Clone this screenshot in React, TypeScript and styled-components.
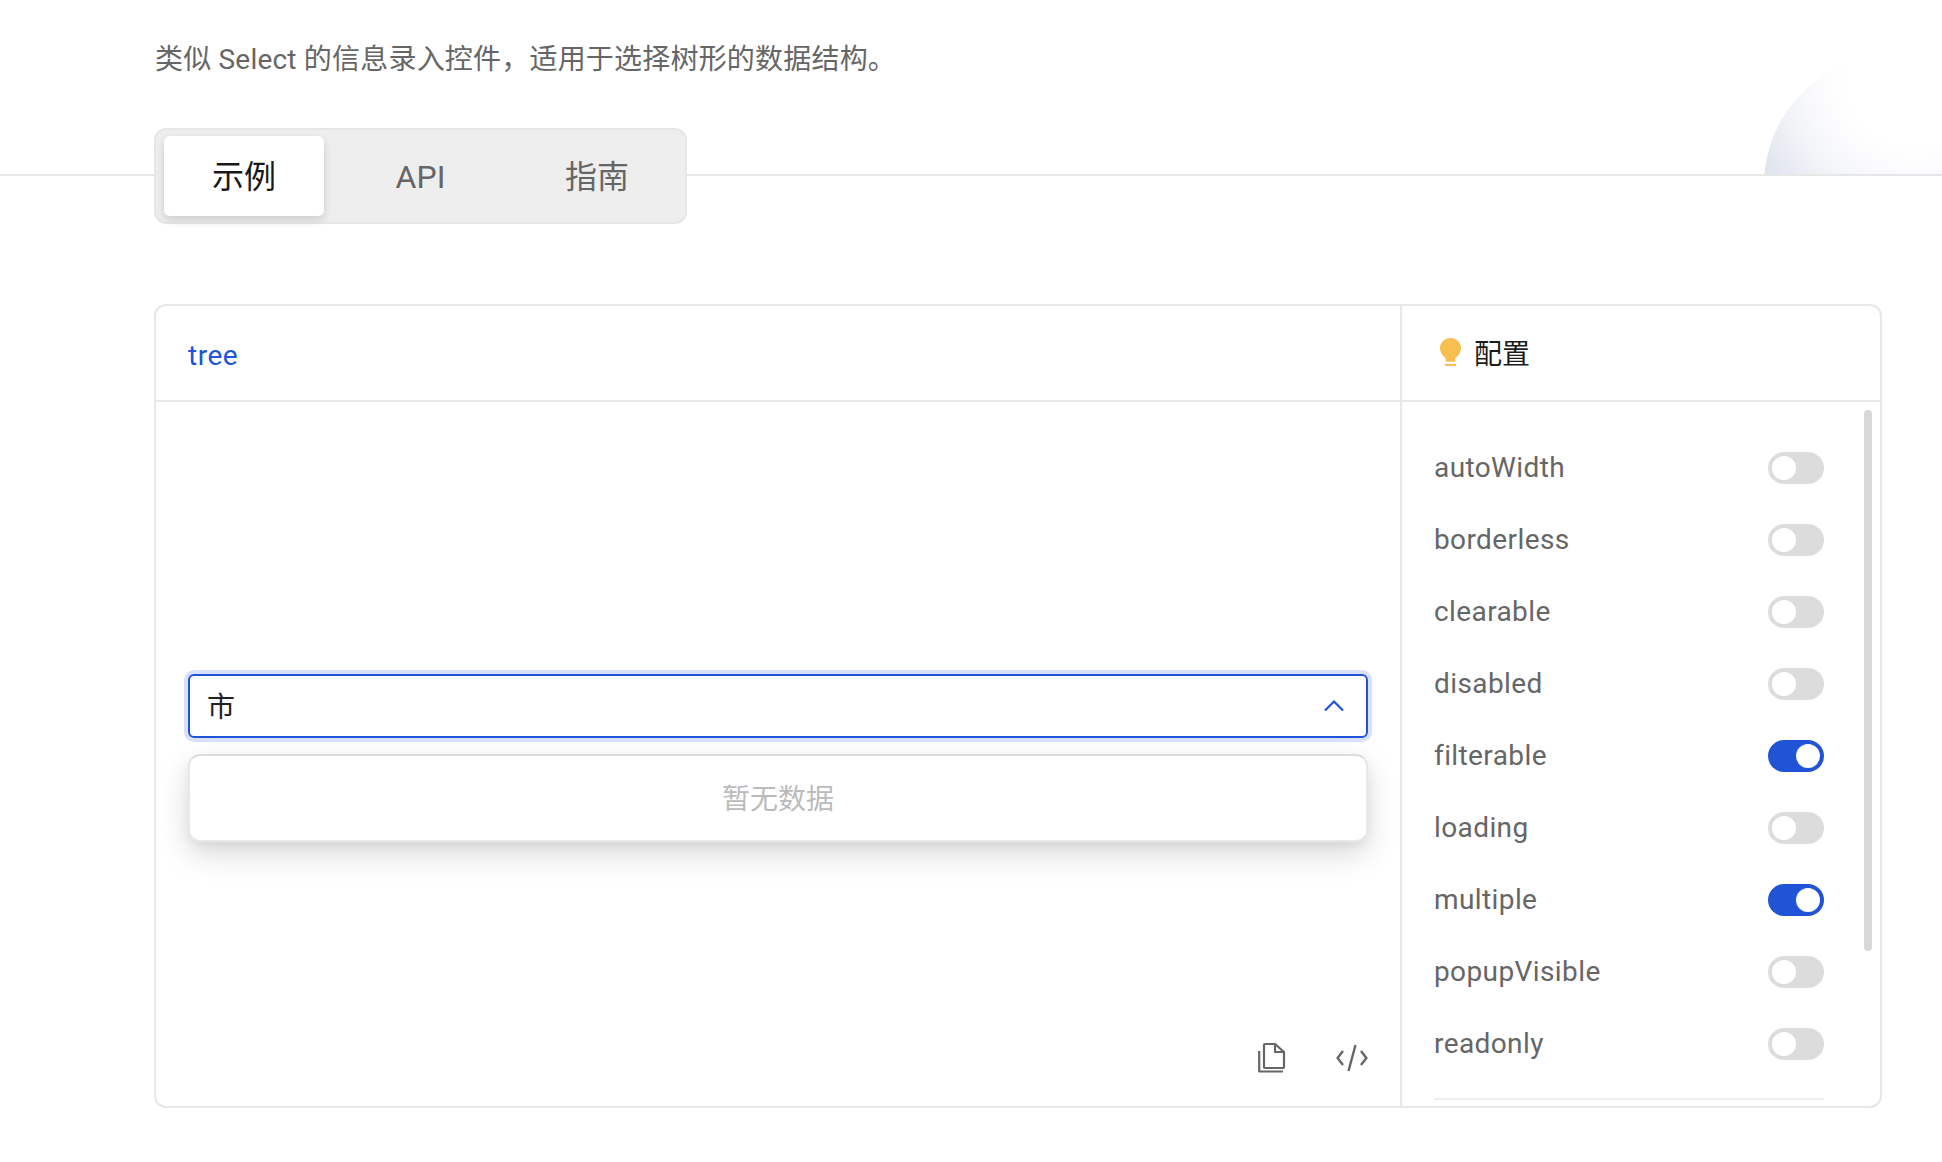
import React from 'react'
import styled, { createGlobalStyle } from 'styled-components'

const GlobalStyle = createGlobalStyle`
  html, body {
    margin: 0;
    height: 100%;
    background: #fff;
    overflow: hidden;
  }
  body {
    font-family: Roboto, "Noto Sans CJK SC", sans-serif;
    color: #666;
  }
`

const Page = styled.div`
  width: 1942px;
  height: 1162px;
`

const Header = styled.header`
  position: relative;
  box-sizing: border-box;
  height: 176px;
  padding: 40px 0 0 154px;
  border-bottom: 2px solid #e7e7e7;
`

const BlobClip = styled.div`
  position: absolute;
  inset: 0;
  overflow: hidden;
`

const Blob = styled.div`
  position: absolute;
  left: 1764px;
  top: 55px;
  width: 260px;
  height: 260px;
  border-radius: 50%;
  background: radial-gradient(
    circle at 151px 20px,
    #fff 0,
    #fff 70px,
    #fcfcfe 92px,
    #f7f8fb 112px,
    #f1f3f7 132px,
    #e1e5ef 172px,
    #dce0eb 200px
  );
`

const Description = styled.p`
  margin: 0 0 48px 1px;
  font-size: 28px;
  line-height: 40px;
  letter-spacing: 0.2px;
  color: #666;
`

const Tabs = styled.nav`
  position: relative;
  display: flex;
  box-sizing: border-box;
  width: 533px;
  height: 96px;
  padding: 6px 8px;
  border: 2px solid #e7e7e7;
  border-radius: 12px;
  background: #eee;
`

const Tab = styled.div<{ $active?: boolean; $wide?: boolean }>`
  display: flex;
  align-items: center;
  justify-content: center;
  box-sizing: border-box;
  width: 160px;
  padding-top: 2px;
  ${p => p.$wide && 'flex: 1;'}
  font-size: 32px;
  line-height: 44px;
  border-radius: 6px;
  color: ${p => (p.$active ? '#181818' : '#666')};
  background: ${p => (p.$active ? '#fff' : 'transparent')};
  box-shadow: ${p => (p.$active ? '0 4px 10px rgba(0, 0, 0, 0.14)' : 'none')};
`

const Card = styled.section`
  display: flex;
  box-sizing: border-box;
  width: 1728px;
  height: 804px;
  margin: 128px 0 0 154px;
  border: 2px solid #e7e7e7;
  border-radius: 12px;
  overflow: hidden;
`

const Demo = styled.div`
  display: flex;
  flex-direction: column;
  width: 1244px;
  border-right: 2px solid #e7e7e7;
`

const DemoTitle = styled.div`
  display: flex;
  align-items: center;
  box-sizing: border-box;
  height: 96px;
  padding: 4px 32px 0;
  border-bottom: 2px solid #e7e7e7;
  font-size: 28px;
  letter-spacing: 0.5px;
  color: #2053d6;
`

const Stage = styled.div`
  position: relative;
  flex: 1;
  padding: 272px 32px 0;
`

const SelectBox = styled.div`
  display: flex;
  align-items: center;
  justify-content: space-between;
  box-sizing: border-box;
  height: 64px;
  padding: 0 22px 0 17px;
  border: 2px solid #2053d6;
  border-radius: 6px;
  box-shadow: 0 0 0 4px #d8e0fa;
  font-size: 28px;
  color: #222;

  span {
    margin-top: -2px;
  }
`

const Popup = styled.div`
  position: absolute;
  top: 352px;
  left: 32px;
  right: 32px;
  display: flex;
  align-items: center;
  justify-content: center;
  box-sizing: border-box;
  height: 88px;
  padding-bottom: 2px;
  border: 2px solid #e8e8e8;
  border-top-color: #dcdcdc;
  border-radius: 12px;
  background: #fff;
  box-shadow: 0 12px 30px rgba(0, 0, 0, 0.15), 0 4px 10px rgba(0, 0, 0, 0.05);
  font-size: 28px;
  color: #bbb;
`

const Actions = styled.div`
  position: absolute;
  right: 32px;
  bottom: 33px;
  display: flex;
  align-items: center;
  gap: 50px;
  color: #666;
`

const Config = styled.aside`
  position: relative;
  flex: 1;
  display: flex;
  flex-direction: column;
  overflow: hidden;
`

const ConfigTitle = styled.div`
  display: flex;
  align-items: center;
  gap: 13px;
  box-sizing: border-box;
  height: 96px;
  padding: 0 0 2px 38px;
  border-bottom: 2px solid #e7e7e7;
  font-size: 28px;
  color: #1c1c1c;
`

const OptionList = styled.div`
  flex: 1;
  padding: 29px 56px 0 32px;
`

const OptionRow = styled.div`
  display: flex;
  align-items: center;
  justify-content: space-between;
  height: 72px;
  font-size: 28px;
  letter-spacing: 0.4px;
  color: #666;
`

const Switch = styled.span<{ $on?: boolean }>`
  display: flex;
  justify-content: ${p => (p.$on ? 'flex-end' : 'flex-start')};
  box-sizing: border-box;
  width: 56px;
  height: 32px;
  margin-top: 2px;
  padding: 4px;
  border-radius: 16px;
  background: ${p => (p.$on ? '#2053d6' : '#dcdcdc')};

  &::after {
    content: '';
    width: 24px;
    height: 24px;
    border-radius: 50%;
    background: #fff;
  }
`

const ListRule = styled.div`
  height: 2px;
  margin-top: 19px;
  background: #eee;
`

const Thumb = styled.div`
  position: absolute;
  top: 104px;
  right: 8px;
  width: 8px;
  height: 541px;
  border-radius: 4px;
  background: #d8d8d8;
`

const Chevron = () => (
  <svg width="20" height="14" viewBox="0 0 20 14" fill="none" stroke="#2053d6" strokeWidth="2.2">
    <path d="M1 11.5 10 2.5l9 9" />
  </svg>
)

const Bulb = () => (
  <svg width="21" height="28" viewBox="0 0 21 28" fill="#f6bf50">
    <path d="M10.5 0C4.7 0 0 4.6 0 10.3c0 3.6 1.9 6.8 4.5 8.6.6.5.9 1.1 1.1 1.8l.4 3h9l.4-3c.2-.7.5-1.3 1.1-1.8 2.6-1.8 4.5-5 4.5-8.6C21 4.6 16.3 0 10.5 0Z" />
    <rect x="5" y="25.8" width="11" height="2.2" />
  </svg>
)

const CopyIcon = () => (
  <svg width="28" height="31" viewBox="0 0 28 31" fill="none" stroke="currentColor" strokeWidth="2.2" strokeLinejoin="round">
    <path d="M7 2h10l9 8v15a1 1 0 0 1-1 1H7a1 1 0 0 1-1-1V3a1 1 0 0 1 1-1Z" />
    <path d="M17 2v8h9" />
    <path d="M1.2 9v20.5H25" />
  </svg>
)

const CodeIcon = () => (
  <svg width="32" height="28" viewBox="0 0 32 28" fill="none" stroke="currentColor" strokeWidth="2.4">
    <path d="M7 7 1.6 14 7 21" />
    <path d="M25 7l5.4 7-5.4 7" />
    <path d="M19.5 1 12.5 27" />
  </svg>
)

const options = [
  { name: 'autoWidth', on: false },
  { name: 'borderless', on: false },
  { name: 'clearable', on: false },
  { name: 'disabled', on: false },
  { name: 'filterable', on: true },
  { name: 'loading', on: false },
  { name: 'multiple', on: true },
  { name: 'popupVisible', on: false },
  { name: 'readonly', on: false },
]

export default function App() {
  return (
    <Page>
      <GlobalStyle />
      <Header>
        <BlobClip>
          <Blob />
        </BlobClip>
        <Description>类似 Select 的信息录入控件，适用于选择树形的数据结构。</Description>
        <Tabs>
          <Tab $active>示例</Tab>
          <Tab $wide>API</Tab>
          <Tab>指南</Tab>
        </Tabs>
      </Header>
      <Card>
        <Demo>
          <DemoTitle>tree</DemoTitle>
          <Stage>
            <SelectBox>
              <span>市</span>
              <Chevron />
            </SelectBox>
            <Popup>暂无数据</Popup>
            <Actions>
              <CopyIcon />
              <CodeIcon />
            </Actions>
          </Stage>
        </Demo>
        <Config>
          <ConfigTitle>
            <Bulb />
            配置
          </ConfigTitle>
          <OptionList>
            {options.map(option => (
              <OptionRow key={option.name}>
                {option.name}
                <Switch $on={option.on} />
              </OptionRow>
            ))}
            <ListRule />
          </OptionList>
          <Thumb />
        </Config>
      </Card>
    </Page>
  )
}
